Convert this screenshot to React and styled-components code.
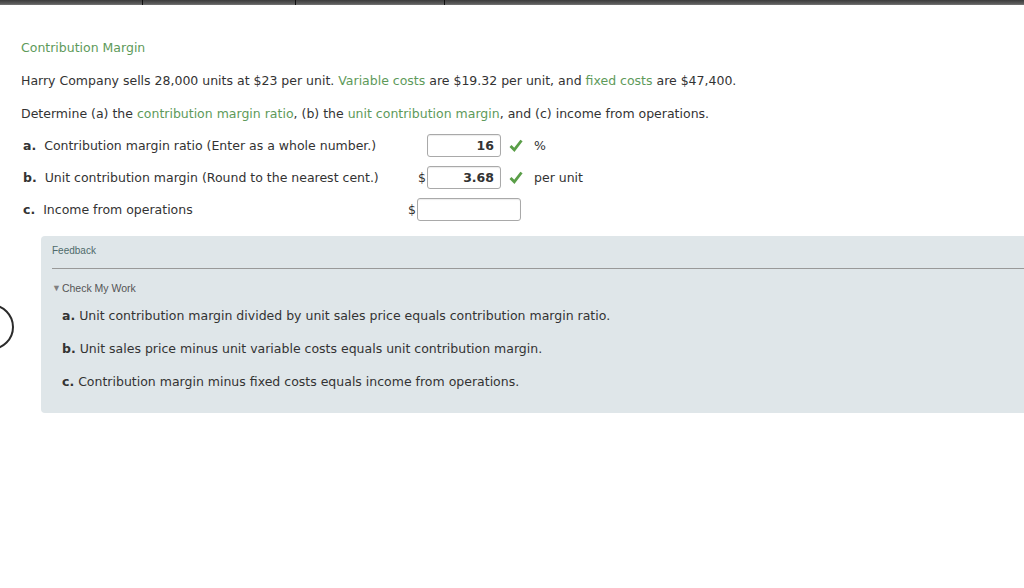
import styled, { createGlobalStyle } from 'styled-components';

const Global = createGlobalStyle`
  html, body {
    margin: 0;
    padding: 0;
    background: #ffffff;
    overflow: hidden;
  }
  body {
    font-family: 'DejaVu Sans', Verdana, sans-serif;
    color: #333333;
  }
`

const Page = styled.div`
  position: relative;
  width: 1024px;
  height: 588px;
  overflow: hidden;
`

const TopBar = styled.div`
  height: 5px;
  background: linear-gradient(#3b3b3b, #5a5a5a 70%, #777777);
  display: flex;
`

const TopTab = styled.div`
  width: ${p => p.w}px;
  height: 5px;
  border-right: 1px solid #111111;
  flex-shrink: 0;
`

const Content = styled.div`
  padding: 35px 0 0 21px;
`

const Title = styled.div`
  font-size: 12.5px;
  line-height: 16px;
  color: #5e9a5a;
`

const Para = styled.p`
  margin: ${p => p.top}px 0 0;
  font-size: 12.5px;
  line-height: 16px;
  color: #333333;
`

const Term = styled.span`
  color: #5e9a5a;
`

const Rows = styled.div`
  margin-top: 7px;
  display: flex;
  flex-direction: column;
`

const Row = styled.div`
  display: flex;
  align-items: center;
  height: 32px;
`

const Label = styled.div`
  width: 379px;
  padding-left: 2px;
  font-size: 12.5px;
  color: #333333;
  flex-shrink: 0;
`

const Letter = styled.b`
  font-weight: bold;
  margin-right: 4px;
`

const ValueCell = styled.div`
  width: 121px;
  display: flex;
  align-items: center;
  justify-content: flex-end;
  flex-shrink: 0;
`

const Dollar = styled.span`
  font-size: 12.5px;
  margin-right: 1px;
`

const Input = styled.div`
  box-sizing: border-box;
  width: ${p => p.w}px;
  height: 23px;
  border: 1px solid #a9a9a9;
  border-radius: 3px;
  box-shadow: inset 0 1px 1px rgba(0, 0, 0, 0.08);
  display: flex;
  align-items: center;
  justify-content: flex-end;
  padding-right: 6px;
  font-size: 12.5px;
  font-weight: bold;
  color: #333333;
  margin-right: ${p => p.mr || 0}px;
`

const Check = styled.svg`
  width: 14px;
  height: 13px;
  margin-left: 8px;
`

const Unit = styled.span`
  font-size: 12.5px;
  margin-left: 11px;
  color: #333333;
`

const Panel = styled.div`
  margin: 11px 0 0 20px;
  width: 1010px;
  height: 177px;
  box-sizing: border-box;
  background: #dfe6e9;
  border-radius: 4px;
  padding: 9px 0 0 11px;
`

const PanelTitle = styled.div`
  font-family: 'Liberation Sans', Arial, sans-serif;
  font-size: 10px;
  line-height: 12px;
  color: #4f6b6b;
  padding-bottom: 11px;
  border-bottom: 1px solid #999999;
`

const Toggle = styled.div`
  margin-top: 13px;
  font-family: 'Liberation Sans', Arial, sans-serif;
  font-size: 10.5px;
  line-height: 12px;
  color: #555555;
  display: flex;
  align-items: center;
`

const Tri = styled.span`
  font-size: 9px;
  color: #808080;
  margin-right: 1px;
`

const Hints = styled.div`
  padding-left: 10px;
  margin-top: 14px;
  display: flex;
  flex-direction: column;
  gap: 17px;
`

const Hint = styled.div`
  font-size: 12.5px;
  line-height: 16px;
  color: #333333;
`

const Ring = styled.div`
  position: absolute;
  left: -32px;
  top: 304px;
  width: 42px;
  height: 42px;
  border: 2.5px solid #2b2b2b;
  border-radius: 50%;
`

function CheckMark() {
  return (
    <Check viewBox="0 0 14 13">
      <path d="M1.5 7 L5.3 10.8 L12.5 1.5" fill="none" stroke="#5a9e48" strokeWidth="2.8" strokeLinejoin="miter" />
    </Check>
  )
}

export default function App() {
  return (
    <Page>
      <Global />
      <TopBar>
        <TopTab w={142} />
        <TopTab w={152} />
        <TopTab w={148} />
      </TopBar>
      <Content>
        <Title>Contribution Margin</Title>
        <Para top={17}>
          Harry Company sells 28,000 units at $23 per unit. <Term>Variable costs</Term> are $19.32 per unit, and <Term>fixed costs</Term> are $47,400.
        </Para>
        <Para top={17}>
          Determine (a) the <Term>contribution margin ratio</Term>, (b) the <Term>unit contribution margin</Term>, and (c) income from operations.
        </Para>
        <Rows>
          <Row>
            <Label><Letter>a.</Letter> Contribution margin ratio (Enter as a whole number.)</Label>
            <ValueCell>
              <Input w={74}>16</Input>
              <CheckMark />
            </ValueCell>
            <Unit>%</Unit>
          </Row>
          <Row>
            <Label><Letter>b.</Letter> Unit contribution margin (Round to the nearest cent.)</Label>
            <ValueCell>
              <Dollar>$</Dollar>
              <Input w={74}>3.68</Input>
              <CheckMark />
            </ValueCell>
            <Unit>per unit</Unit>
          </Row>
          <Row>
            <Label><Letter>c.</Letter> Income from operations</Label>
            <ValueCell>
              <Dollar>$</Dollar>
              <Input w={104} mr={2}></Input>
            </ValueCell>
          </Row>
        </Rows>
        <Panel>
          <PanelTitle>Feedback</PanelTitle>
          <Toggle><Tri>▼</Tri>Check My Work</Toggle>
          <Hints>
            <Hint><b>a.</b> Unit contribution margin divided by unit sales price equals contribution margin ratio.</Hint>
            <Hint><b>b.</b> Unit sales price minus unit variable costs equals unit contribution margin.</Hint>
            <Hint><b>c.</b> Contribution margin minus fixed costs equals income from operations.</Hint>
          </Hints>
        </Panel>
      </Content>
      <Ring />
    </Page>
  )
}
